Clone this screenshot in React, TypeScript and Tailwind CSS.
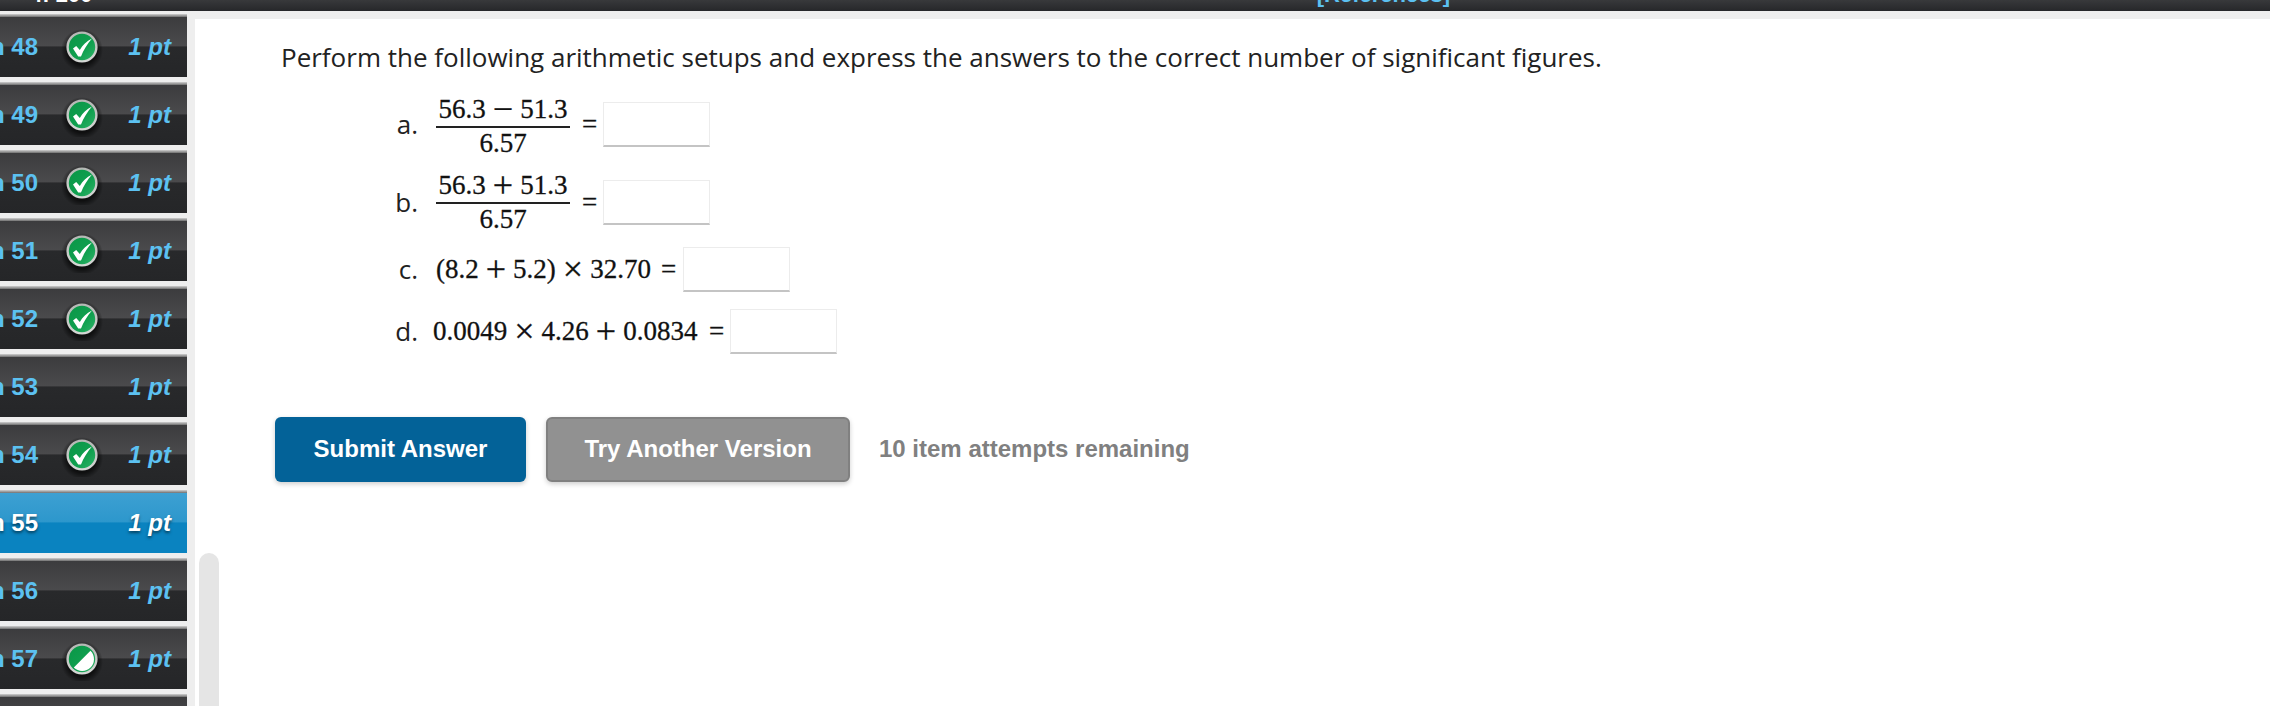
import type { ReactNode } from 'react'

type Status = 'done' | 'partial' | 'none'

const rows: { n: number; status: Status }[] = [
  { n: 48, status: 'done' },
  { n: 49, status: 'done' },
  { n: 50, status: 'done' },
  { n: 51, status: 'done' },
  { n: 52, status: 'done' },
  { n: 53, status: 'none' },
  { n: 54, status: 'done' },
  { n: 55, status: 'none' },
  { n: 56, status: 'none' },
  { n: 57, status: 'partial' },
  { n: 58, status: 'none' },
]

// shared by every status icon
function IconDefs() {
  return (
    <svg width="0" height="0" className="absolute">
      <defs>
        <radialGradient id="iconShadow">
          <stop offset="0.7" stopColor="#000" stopOpacity="0.6" />
          <stop offset="1" stopColor="#000" stopOpacity="0" />
        </radialGradient>
        <linearGradient id="iconGreen" x1="0" y1="0" x2="1" y2="1">
          <stop offset="0" stopColor="#0a9647" />
          <stop offset="0.6" stopColor="#10a04f" />
          <stop offset="1" stopColor="#2fb469" />
        </linearGradient>
        <linearGradient id="iconRing" x1="0" y1="0" x2="0" y2="1">
          <stop offset="0" stopColor="#b4b7b4" />
          <stop offset="1" stopColor="#d6d8d6" />
        </linearGradient>
      </defs>
    </svg>
  )
}

function StatusIcon({ status }: { status: Status }) {
  return (
    <svg width="44" height="44" viewBox="0 0 44 44" className="shrink-0 blur-[0.4px]">
      <circle cx="22" cy="25" r="21" fill="url(#iconShadow)" />
      <circle cx="22" cy="22" r="15.6" fill="url(#iconRing)" />
      <circle cx="22" cy="22" r="13.2" fill="url(#iconGreen)" />
      {status === 'done' ? (
        <path d="M13 23.5 L16.2 21 L19.8 25 C22.5 20.3 26.5 16 32 13.5 C27.5 18.8 23.6 24.8 21 31.5 L18.2 31.5 Z" fill="#fff" />
      ) : (
        <path d="M30.5 13.8 A11.8 11.8 0 0 1 13.8 30.5 Z" fill="#fff" />
      )}
    </svg>
  )
}

function Row({ n, status }: { n: number; status: Status }) {
  const active = n === 55
  return (
    <div className="mb-[5px] shrink-0">
      <div className="h-[3px] bg-[linear-gradient(#d0d0d0,#6f6f6f)]" />
      <div
        className={`flex h-[60px] items-center overflow-hidden font-['Liberation_Sans',sans-serif] text-[24px] font-bold ${
          active
            ? 'bg-[linear-gradient(#3da0d2_0%,#2d97cc_48%,#0a83c0_50%,#0a83c0_100%)] text-white [text-shadow:0_2px_3px_rgba(0,0,0,0.5)]'
            : 'bg-[linear-gradient(#3c3c3e_0%,#4a4a4c_48%,#28292b_50%,#252628_100%)] text-[#5cc1f1]'
        }`}
      >
        <div className="flex w-[38px] shrink-0 justify-end whitespace-nowrap">Question {n}</div>
        <div className="ml-[22px] flex w-[44px] shrink-0 justify-center">
          {status !== 'none' && <StatusIcon status={status} />}
        </div>
        <div className="ml-auto pr-[16px] italic">1 pt</div>
      </div>
    </div>
  )
}

function Answer() {
  return <div className="h-[45px] w-[107px] shrink-0 border border-[#ececec] border-b-2 border-b-[#c4c4c4] bg-white" />
}

function Op({ children }: { children: string }) {
  return <span className="mx-[7px] align-[-3px] text-[36px] leading-none">{children}</span>
}

function Fraction({ top, bottom }: { top: ReactNode; bottom: string }) {
  return (
    <div className="flex w-[134px] flex-col items-center">
      <div className="h-[35px] leading-[29px] whitespace-nowrap">{top}</div>
      <div className="h-[2px] w-full bg-[#222]" />
      <div className="h-[30px] leading-[31px]">{bottom}</div>
    </div>
  )
}

function Label({ children }: { children: string }) {
  return <div className="w-[40px] shrink-0 text-right font-['Open_Sans',sans-serif] text-[26px] text-[#222] [-webkit-text-stroke:0px]">{children}</div>
}

export default function App() {
  return (
    <div className="relative flex h-[706px] w-[2270px] flex-col overflow-hidden bg-[#eeeeee]">
      <IconDefs />
      <div className="relative h-[11px] shrink-0 overflow-hidden bg-[linear-gradient(#38393b,#26272a)]">
        <div className="mt-[-17px] flex justify-between pl-[30px] pr-[820px] font-['Liberation_Sans',sans-serif] text-[22px] font-bold leading-[24px]">
          <span className="text-white">4: 200</span>
          <span className="text-[#5cc1f1]">[References]</span>
        </div>
      </div>
      <div className="flex min-h-0 flex-1">
        <div className="w-[195px] shrink-0 pt-[3px] pr-[8px]">
          <div className="flex flex-col">
            {rows.map((r) => (
              <Row key={r.n} n={r.n} status={r.status} />
            ))}
          </div>
        </div>
        <div className="mt-[8px] flex-1 bg-white pl-[86px] pt-[21px]">
          <p className="font-['Open_Sans',sans-serif] text-[26px] leading-[34px] text-[#222]">
            Perform the following arithmetic setups and express the answers to the correct number of significant figures.
          </p>
          <div className="ml-[97px] mt-[17px] font-['Liberation_Serif',serif] text-[27px] text-[#111] [-webkit-text-stroke:0.3px_#111]">
            <div className="flex h-[67px] items-center">
              <Label>a.</Label>
              <div className="ml-[18px]">
                <Fraction top={<>56.3<Op>−</Op>51.3</>} bottom="6.57" />
              </div>
              <span className="ml-[12px] mr-[6px]">=</span>
              <Answer />
            </div>
            <div className="mt-[11px] flex h-[67px] items-center">
              <Label>b.</Label>
              <div className="ml-[18px] mb-[4px]">
                <Fraction top={<>56.3<Op>+</Op>51.3</>} bottom="6.57" />
              </div>
              <span className="ml-[12px] mr-[6px]">=</span>
              <Answer />
            </div>
            <div className="mt-[11px] flex h-[45px] items-center">
              <Label>c.</Label>
              <span className="ml-[18px] w-[215px] whitespace-nowrap">(8.2<Op>+</Op>5.2)<Op>×</Op>32.70</span>
              <span className="ml-[10px] mr-[7px]">=</span>
              <Answer />
            </div>
            <div className="mt-[17px] flex h-[45px] items-center">
              <Label>d.</Label>
              <span className="ml-[15px] w-[267px] whitespace-nowrap">0.0049<Op>×</Op>4.26<Op>+</Op>0.0834</span>
              <span className="ml-[9px] mr-[6px]">=</span>
              <Answer />
            </div>
          </div>
          <div className="-ml-[6px] mt-[63px] flex items-center font-['Liberation_Sans',sans-serif] text-[24px] font-bold">
            <button className="h-[65px] w-[251px] rounded-[6px] bg-[#036298] pb-[2px] text-white shadow-[0_2px_5px_rgba(0,0,0,0.2)]">
              Submit Answer
            </button>
            <button className="ml-[20px] h-[65px] w-[304px] rounded-[6px] border-2 border-[#808080] bg-[#919191] pb-[2px] text-white shadow-[0_2px_5px_rgba(0,0,0,0.2)]">
              Try Another Version
            </button>
            <span className="ml-[29px] mb-[2px] text-[#808080]">10 item attempts remaining</span>
          </div>
        </div>
      </div>
      <div className="absolute left-[199px] top-[553px] h-[170px] w-[20px] rounded-[10px] bg-[#e5e5e5]" />
    </div>
  )
}
